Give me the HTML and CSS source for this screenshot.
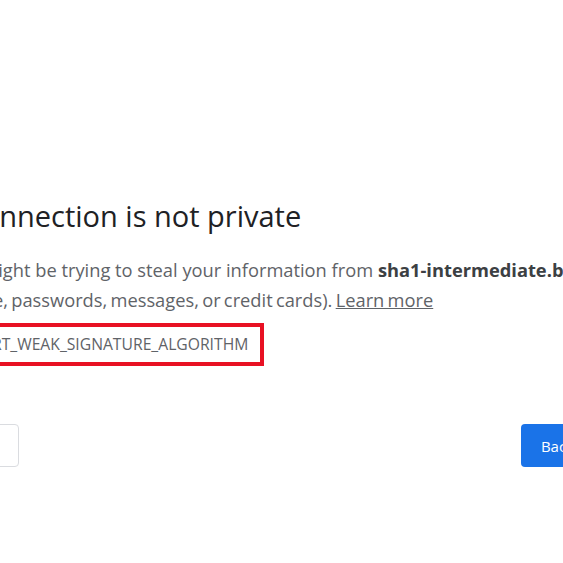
FILE: index.html
```html
<!DOCTYPE html>
<html lang="en">

<head>
    <meta charset="UTF-8">
    <meta name="viewport" content="width=device-width, initial-scale=1.0">
    <title>Privacy error</title>
    <link rel="stylesheet" href="styles.css">
</head>

<body>
    <main class="interstitial">
        <h1 class="heading">Your connection is not private</h1>
        <p class="desc">
            <span class="line">Attackers might be trying to steal your information from <strong>sha1-intermediate.badssl.com</strong></span>
            <span class="line">(for example, passwords, messages, or credit cards). <a href="#">Learn more</a></span>
        </p>
        <div class="error-code">NET::ERR_CERT_WEAK_SIGNATURE_ALGORITHM</div>
        <div class="actions">
            <button class="btn secondary">Advanced</button>
            <button class="btn primary">Back to safety</button>
        </div>
    </main>
</body>

</html>
```

FILE: styles.css
```css
* {
    margin: 0;
    padding: 0;
    box-sizing: border-box;
}

body {
    font-family: 'Open Sans', 'Noto Sans', sans-serif;
    background: #fff;
    color: #5f6368;
    overflow: hidden;
    width: 563px;
    height: 563px;
}

/* the page is scrolled sideways, so the left edge of the card sits off-screen */
.interstitial {
    width: 761px;
    margin-left: -103px;
    padding-top: 196px;
}

.heading {
    font-size: 29px;
    font-weight: 400;
    line-height: 40px;
    color: #202124;
    margin-bottom: 19px;
}

.desc {
    font-size: 18.3px;
    line-height: 30px;
    white-space: nowrap;
}

.desc .line {
    display: block;
}

.desc .line + .line {
    word-spacing: -1.5px;
}

.desc strong {
    color: #3c4043;
    font-weight: 700;
}

.desc a {
    color: #5f6368;
    text-decoration: underline;
}

.error-code {
    display: inline-block;
    margin-top: 8px;
    padding: 7px 12px 7px 0;
    border: 4px solid #e81123;
    font-size: 15.7px;
    line-height: 21px;
    color: #5f6368;
}

.actions {
    display: flex;
    justify-content: space-between;
    margin-top: 58px;
}

.btn {
    font-family: inherit;
    font-size: 15px;
    height: 43px;
    padding: 0 20px;
    border-radius: 4px;
    cursor: pointer;
}

.secondary {
    background: #fff;
    border: 1px solid #dadce0;
    color: #1a73e8;
    padding: 0 26px;
}

.primary {
    background: #1a73e8;
    border: none;
    color: #fff;
}
```
